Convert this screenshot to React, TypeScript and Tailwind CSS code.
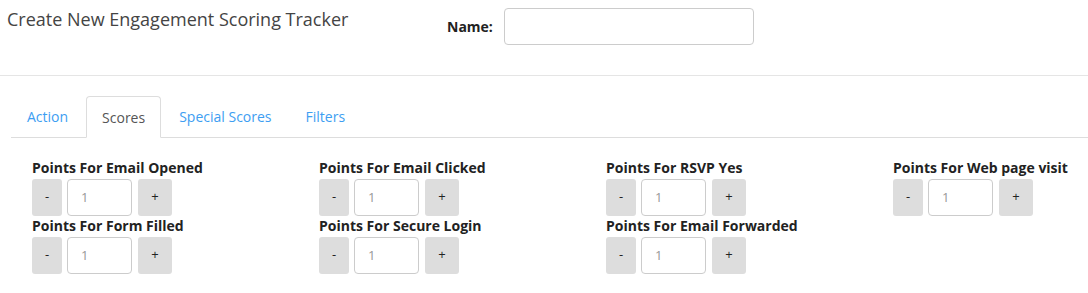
import React from "react";

const groups: string[][] = [
  ["Points For Email Opened", "Points For Form Filled"],
  ["Points For Email Clicked", "Points For Secure Login"],
  ["Points For RSVP Yes", "Points For Email Forwarded"],
  ["Points For Web page visit"],
];

function Stepper({ label }: { label: string }) {
  return (
    <div className="flex flex-col">
      <div className="text-[14px] font-bold leading-[18px] text-[#222] h-[20px] pt-[1px] whitespace-nowrap">{label}</div>
      <div className="flex items-center h-[38px]">
        <button className="w-[30px] h-[37px] rounded-[3px] bg-[#dddddd] text-[13px] text-[#222] flex items-center justify-center">-</button>
        <input
          readOnly
          value="1"
          className="ml-[5px] w-[65px] h-[37px] rounded-[4px] border border-[#cccccc] bg-white pl-[13px] text-[13px] text-[#999] outline-none"
          style={{ fontFamily: "'Open Sans', sans-serif" }}
        />
        <button className="ml-[6px] w-[34px] h-[37px] rounded-[3px] bg-[#dddddd] text-[13px] text-[#222] flex items-center justify-center">+</button>
      </div>
    </div>
  );
}

export default function App() {
  return (
    <div className="w-[1088px] h-[293px] bg-white overflow-hidden" style={{ fontFamily: "'Open Sans', sans-serif" }}>
      <div className="flex items-start h-[76px] border-b border-[#e5e5e5]">
        <div className="pl-[7px] pt-[7px] text-[18px] text-[#444] leading-[24px] w-[447px] whitespace-nowrap">Create New Engagement Scoring Tracker</div>
        <div className="flex items-center pt-[8px]">
          <label className="text-[14px] font-bold text-[#222] w-[57px]">Name:</label>
          <input className="w-[250px] h-[37px] rounded-[4px] border border-[#cccccc] outline-none" />
        </div>
      </div>
      <div className="pl-[11px] pt-[20px]">
        <div className="flex border-b border-[#dddddd] h-[42px]">
          <div className="px-[15px] border border-transparent h-[41px] flex items-center text-[14px] text-[#3d9ef2]">Action</div>
          <div className="ml-[2px] px-[15px] h-[42px] flex items-center text-[14px] text-[#555] bg-white border border-[#dddddd] border-b-white rounded-t-[4px] -mb-px">Scores</div>
          <div className="ml-[2px] px-[15px] border border-transparent h-[41px] flex items-center text-[14px] text-[#3d9ef2]">Special Scores</div>
          <div className="ml-[2px] px-[15px] border border-transparent h-[41px] flex items-center text-[14px] text-[#3d9ef2]">Filters</div>
        </div>
      </div>
      <div className="flex pl-[32px] pt-[20px]">
        {groups.map((g, i) => (
          <div key={i} className="w-[287px] shrink-0 flex flex-col">
            {g.map((l) => (
              <Stepper key={l} label={l} />
            ))}
          </div>
        ))}
      </div>
    </div>
  );
}
